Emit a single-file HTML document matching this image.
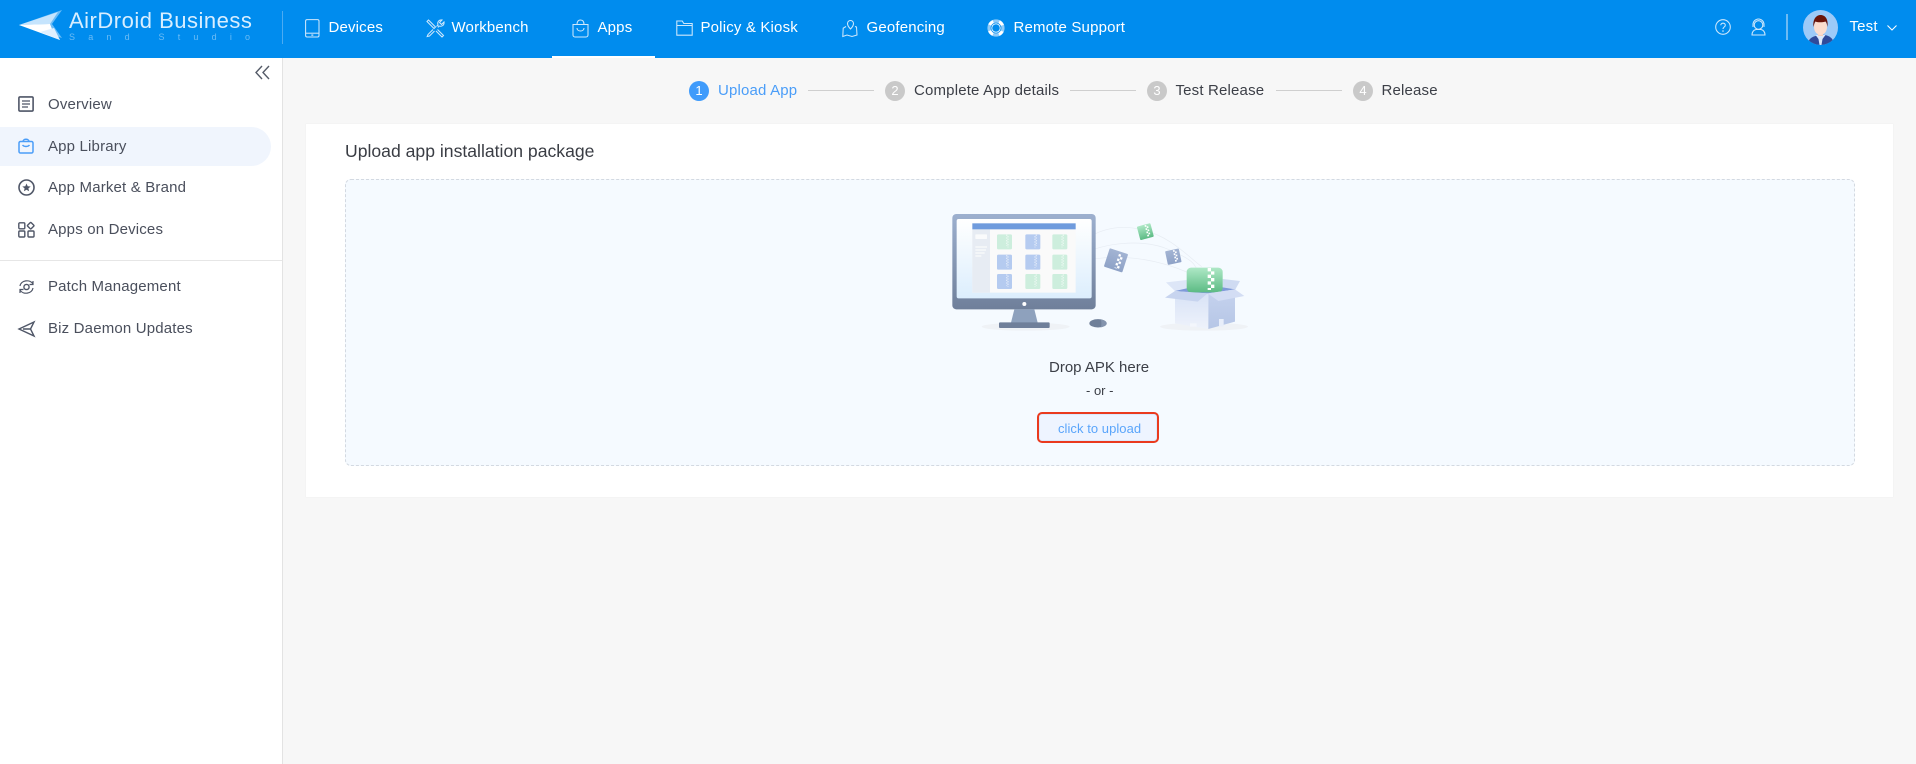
<!DOCTYPE html>
<html><head><meta charset="utf-8"><style>
html,body{margin:0;padding:0;width:1916px;height:764px;overflow:hidden;background:#f7f7f7;font-family:"Liberation Sans",Arial,sans-serif;color:#3c3f47}
.a{position:absolute}
.t{position:absolute;line-height:20px;white-space:nowrap;font-size:15px;letter-spacing:.17px}
.n{color:#fff}
.s{color:#4a4f5c;letter-spacing:.17px}
.c{position:absolute;width:20px;height:20px;border-radius:50%;background:#c9c9c9;color:#fff;font-size:13px;line-height:20px;text-align:center;top:81px}
.l{position:absolute;height:1px;background:#cfcfcf;top:90px}
svg{position:absolute;overflow:visible}
.w{fill:none;stroke:#cfe8fc;stroke-width:1.05}
.d{fill:none;stroke:#4f5667;stroke-width:1.6}
</style></head><body>
<div class="a" style="left:0;top:0;width:1916px;height:58px;background:#008cee"></div>
<svg style="left:0;top:0" width="100" height="58">
<polygon points="19,25 62,10 52,24 62,38" fill="#8fcdfb" opacity=".75"/>
<polygon points="19,25 58,12 50,24" fill="#c5e4fd"/>
<polygon points="19,25 50,24 54,34 60,40" fill="#fff"/>
<polygon points="40,32 60,40 54,28" fill="#dff0ff"/>
</svg>
<div class="t" style="left:69px;top:11px;font-size:22px;letter-spacing:.5px;color:#d8eeff;line-height:20px">AirDroid Business</div>
<div class="t" style="left:69px;top:27px;font-size:9px;letter-spacing:13.2px;color:#6cbcf5;line-height:20px">Sand Studio</div>
<div class="a" style="left:282px;top:11px;width:1px;height:33px;background:#4cabf2"></div>

<svg style="left:305px;top:19px" width="15" height="19"><rect x=".6" y=".6" width="13.400" height="17.400" rx="1.500" class="w"/><path d="M1 14.200h13" class="w"/><rect x="6.300" y="15.500" width="2" height="1.200" fill="#d4eafd"/></svg>
<div class="t n" style="left:328.500px;top:18px">Devices</div>
<svg style="left:426px;top:19px" width="19" height="19"><path d="M1 2.500 2.500 1 9.500 8 8 9.500zM11.500 10.500 17.500 16.500 16 18 10 12M7 10.500 2 15.500 1.200 17.500 3.500 17 8.500 12M10.500 7.500 12 6C11 3 13 .5 16 1L13.500 3.500 15.500 5.500 18 3C18.500 6 16 8 13 7L12 8.500" class="w"/></svg>
<div class="t n" style="left:451.500px;top:18px">Workbench</div>
<svg style="left:572px;top:19px" width="17" height="19"><path d="M1 5.500h15v10.500a2 2 0 0 1-2 2H3a2 2 0 0 1-2-2zM5 5.500C5 3 6 1 8.500 1S12 3 12 5.500M5 9c0 4 7 4 7 0" class="w"/></svg>
<div class="t n" style="left:597.500px;top:18px">Apps</div>
<div class="a" style="left:552px;top:56px;width:103px;height:2px;background:#fff"></div>
<svg style="left:676px;top:20px" width="17" height="16"><path d="M.8 15.200V1h5.500l1.500 2.500H16.200v11.700zM.8 5.500h15.400" class="w"/></svg>
<div class="t n" style="left:700.500px;top:18px">Policy &amp; Kiosk</div>
<svg style="left:842px;top:19px" width="16" height="19"><path d="M8.500 10C6.500 8 5.500 6.500 5.500 4.500a3 3 0 0 1 6 0C11.500 6.500 10.500 8 8.500 10zM4 7.500 1.200 9.200 .8 17.500 5 16l5 1.500L15 16 14.500 8 13 7.500" class="w"/></svg>
<div class="t n" style="left:866.500px;top:18px">Geofencing</div>
<svg style="left:987px;top:19px" width="18" height="18"><circle cx="9" cy="9" r="7" fill="none" stroke="#8fcbf8" stroke-width="3.200"/><circle cx="9" cy="9" r="7" fill="none" stroke="#fff" stroke-width="3.200" stroke-dasharray="5 6" stroke-dashoffset="2.500" transform="rotate(45 9 9)"/><circle cx="9" cy="9" r="4.200" fill="none" stroke="#fff" stroke-width=".8"/></svg>
<div class="t n" style="left:1013.500px;top:18px">Remote Support</div>

<svg style="left:1715px;top:19px" width="16" height="16"><circle cx="8" cy="8" r="7.300" class="w"/><path d="M5.800 6.200C5.800 3.500 10.300 3.500 10.300 6.200 10.300 8 8 8 8 10" class="w"/><circle cx="8" cy="12" r=".8" fill="#d4eafd"/></svg>
<svg style="left:1751px;top:19px" width="15" height="17"><circle cx="7.500" cy="6" r="4.300" class="w"/><path d="M2 8V5.500a5.500 5.500 0 0 1 11 0V8M1 16c0-3.500 2-5 4-5.500h5c2 .5 4 2 4 5.500z" class="w"/></svg>
<div class="a" style="left:1786px;top:14px;width:2px;height:26px;background:#6dbbf4"></div>
<svg style="left:1803px;top:10px" width="35" height="35" viewBox="0 0 35 35"><defs><clipPath id="av"><circle cx="17.500" cy="17.500" r="17.500"/></clipPath></defs><g clip-path="url(#av)"><rect width="35" height="35" fill="#9ccaf8"/><path d="M5 35c0-7 5-9 12.500-10S31 28 31 35z" fill="#2f4a9a"/><path d="M12.500 25h10l-3 4-1 6h-2l-1-6z" fill="#dce8fa"/><rect x="15" y="21" width="5" height="5" fill="#f5cdbb"/><ellipse cx="17.500" cy="17" rx="6.500" ry="8" fill="#fbdccd"/><path d="M10.500 17c-1-8 3-12 7-12s8 3 7 12c-.5-3-1-4.500-2-5.500-3 1-8 1-10 0-1 1-1.500 3-2 5.500z" fill="#6b1409"/></g></svg>
<div class="t n" style="left:1849.500px;top:17px">Test</div>
<svg style="left:1887px;top:25px" width="10" height="6"><path d="M.5.500 5 5 9.500.500" class="w" style="stroke:#fff"/></svg>

<div class="a" style="left:0;top:58px;width:282px;height:706px;background:#fff;border-right:1px solid #e3e3e3"></div>
<svg style="left:255px;top:65px" width="15" height="15"><path d="M7 1 1 7.500 7 14M14 1 8 7.500 14 14" fill="none" stroke="#555b68" stroke-width="1.400"/></svg>

<svg style="left:18px;top:96px" width="16" height="16"><rect x=".9" y=".9" width="14.200" height="14.200" rx="1.200" class="d"/><path d="M4 5h8M4 8h8M4 11h6" class="d" style="stroke-width:1.300"/></svg>
<div class="t s" style="left:48px;top:95px">Overview</div>
<div class="a" style="left:0;top:127px;width:271px;height:39px;background:#f0f5fd;border-radius:0 20px 20px 0"></div>
<svg style="left:18px;top:138px" width="16" height="16"><rect x="1" y="3.500" width="14" height="11.500" rx="1.500" fill="none" stroke="#4a9df8" stroke-width="1.500"/><path d="M5 3.500C5 .5 11 .5 11 3.500M4.500 7c1.500 2 5.500 2 7 0" fill="none" stroke="#4a9df8" stroke-width="1.400"/></svg>
<div class="t s" style="left:48px;top:137px">App Library</div>
<svg style="left:18px;top:179px" width="17" height="17"><circle cx="8.500" cy="8.500" r="7.500" class="d"/><polygon points="8.500,4.500 9.700,7.300 12.700,7.500 10.400,9.400 11.100,12.300 8.500,10.700 5.900,12.300 6.600,9.400 4.300,7.500 7.300,7.300" fill="#4f5667"/></svg>
<div class="t s" style="left:48px;top:178px">App Market &amp; Brand</div>
<svg style="left:18px;top:222px" width="17" height="16"><rect x=".8" y=".8" width="6" height="6" rx="1" class="d" style="stroke-width:1.400"/><rect x=".8" y="9" width="6" height="6" rx="1" class="d" style="stroke-width:1.400"/><rect x="10" y="9" width="6" height="6" rx="1" class="d" style="stroke-width:1.400"/><rect x="10.200" y="1.200" width="5" height="5" rx=".8" transform="rotate(45 12.700 3.700)" class="d" style="stroke-width:1.400"/></svg>
<div class="t s" style="left:48px;top:220px">Apps on Devices</div>
<div class="a" style="left:0;top:260px;width:282px;height:1px;background:#e6e6e6"></div>
<svg style="left:18px;top:279px" width="17" height="16"><circle cx="8.500" cy="8" r="2.600" class="d" style="stroke-width:1.400"/><path d="M2 7c1-6 10-7 13-2M15 9c-1 6-10 7-13 2M15 2v3.500h-3.500M2 14v-3.500h3.500" class="d" style="stroke-width:1.200"/></svg>
<div class="t s" style="left:48px;top:277px">Patch Management</div>
<svg style="left:18px;top:321px" width="17" height="16"><path d="M16 1 1 8l15 7-3.500-7zM12.500 8H5" class="d" style="stroke-width:1.400"/></svg>
<div class="t s" style="left:48px;top:319px">Biz Daemon Updates</div>

<div class="c" style="left:689px;background:#3f9bfb">1</div>
<div class="t" style="left:718px;top:81px;color:#4a9df8">Upload App</div>
<div class="l" style="left:808px;width:66px"></div>
<div class="c" style="left:885px">2</div>
<div class="t" style="left:914px;top:81px">Complete App details</div>
<div class="l" style="left:1070px;width:66px"></div>
<div class="c" style="left:1147px">3</div>
<div class="t" style="left:1175.500px;top:81px">Test Release</div>
<div class="l" style="left:1276px;width:66px"></div>
<div class="c" style="left:1353px">4</div>
<div class="t" style="left:1381.500px;top:81px">Release</div>

<div class="a" style="left:306px;top:124px;width:1587px;height:373px;background:#fff;box-shadow:0 0 1px #e9e9e9"></div>
<div class="t" style="left:345px;top:141px;font-size:17.600px;letter-spacing:0;color:#3a3d44">Upload app installation package</div>
<div class="a" style="left:345px;top:179px;width:1508px;height:285px;background:#f5faff;border:1px dashed #d3d9e1;border-radius:6px"></div>

<svg style="left:930px;top:200px" width="330" height="140" viewBox="0 0 990 420">
<defs>
<linearGradient id="m" x1="0" y1="0" x2="0" y2="1"><stop offset="0" stop-color="#9db0cf"/><stop offset="1" stop-color="#6f7f9a"/></linearGradient>
<linearGradient id="sc" x1="0" y1="0" x2="0" y2="1"><stop offset="0" stop-color="#fff"/><stop offset="1" stop-color="#dceefd"/></linearGradient>
<linearGradient id="g" x1="0" y1="0" x2="0" y2="1"><stop offset="0" stop-color="#aee8c6"/><stop offset="1" stop-color="#5cbb84"/></linearGradient>
<linearGradient id="bl" x1="0" y1="0" x2="0" y2="1"><stop offset="0" stop-color="#a3b4d3"/><stop offset="1" stop-color="#8ea2c7"/></linearGradient>
<linearGradient id="bf" x1="0" y1="0" x2="0" y2="1"><stop offset="0" stop-color="#d7e2f6"/><stop offset="1" stop-color="#eef2fb"/></linearGradient>
<linearGradient id="br" x1="0" y1="0" x2="0" y2="1"><stop offset="0" stop-color="#c6d3ee"/><stop offset="1" stop-color="#b6c6e6"/></linearGradient>
</defs>
<ellipse cx="287" cy="380" rx="132" ry="12" fill="#eff2f6"/>
<ellipse cx="822" cy="380" rx="132" ry="12" fill="#eff2f6"/>
<g fill="none" stroke="#e7ecf3" stroke-width="2">
<path d="M438 152C480 90 560 70 640 90S770 165 815 200"/>
<path d="M438 172C520 125 640 115 720 150S790 195 800 205"/>
<path d="M438 188C520 165 640 160 775 218"/>
</g>
<rect x="67" y="42" width="430" height="286" rx="12" fill="url(#m)"/>
<rect x="80" y="57" width="405" height="238" rx="6" fill="url(#sc)"/>
<rect x="127" y="70" width="310" height="208" fill="#fafafa"/>
<rect x="127" y="88" width="53" height="190" fill="#e7ecf3"/>
<rect x="127" y="70" width="310" height="18" fill="#6f9bdd"/>
<rect x="136" y="103" width="35" height="14" rx="2" fill="#fafbfc"/>
<path d="M136 141h35M136 150h32M136 159h28M136 168h18" stroke="#fafbfc" stroke-width="4"/>
<g>
<rect x="201" y="103" width="45" height="45" rx="4" fill="#cdeedd"/><rect x="286" y="103" width="45" height="45" rx="4" fill="#b5cbf0"/><rect x="367" y="103" width="45" height="45" rx="4" fill="#cdeedd"/>
<rect x="201" y="164" width="45" height="45" rx="4" fill="#b5cbf0"/><rect x="286" y="164" width="45" height="45" rx="4" fill="#b5cbf0"/><rect x="367" y="164" width="45" height="45" rx="4" fill="#cdeedd"/>
<rect x="201" y="222" width="45" height="45" rx="4" fill="#b5cbf0"/><rect x="286" y="222" width="45" height="45" rx="4" fill="#cdeedd"/><rect x="367" y="222" width="45" height="45" rx="4" fill="#cdeedd"/>
</g>
<g stroke="#fff" stroke-width="4" stroke-dasharray="4 4" opacity=".55">
<path d="M230 104v34M319 104v34M400 104v34M230 165v34M319 165v34M400 165v34M230 223v34M319 223v34M400 223v34"/>
<path d="M234 108v34M315 108v34M396 108v34M234 169v34M315 169v34M396 169v34M234 227v34M315 227v34M396 227v34"/>
</g>
<circle cx="283" cy="312" r="6" fill="#fff"/>
<polygon points="253,328 313,328 323,368 243,368" fill="#8ea1bd"/>
<rect x="207" y="367" width="152" height="17" rx="3" fill="#6f7f9a"/>
<ellipse cx="504" cy="370" rx="26" ry="12.500" fill="#6f7f99"/>
<path d="M512 358c10 2 18 6 18 12s-8 10-18 12c3-7 3-17 0-24z" fill="#8393ad"/>
<g transform="rotate(-15 646 95)"><rect x="625" y="74" width="42" height="42" rx="3" fill="url(#g)"/><g stroke="#fff" stroke-width="5" stroke-dasharray="5 5"><path d="M651 76v36"/><path d="M656 81v30"/></g></g>
<g transform="rotate(18 558 181)"><rect x="529" y="152" width="58" height="58" rx="3" fill="url(#bl)"/><g stroke="#fff" stroke-width="7" stroke-dasharray="7 7"><path d="M564 160v44"/><path d="M571 167v40"/></g></g>
<g transform="rotate(-12 730 170)"><rect x="709" y="149" width="42" height="42" rx="3" fill="url(#bl)"/><g stroke="#fff" stroke-width="5" stroke-dasharray="5 5"><path d="M735 151v36"/><path d="M740 156v30"/></g></g>
<polygon points="708,247 770,240 770,270 735,273" fill="#dde6f7"/>
<polygon points="878,237 930,243 915,270 878,265" fill="#cfdbf2"/>
<polygon points="735,273 770,265 878,262 915,268 833,282" fill="#7f9ad9"/>
<rect x="770" y="203" width="108" height="74" rx="13" fill="url(#g)"/>
<g stroke="#fff" stroke-width="10" stroke-dasharray="10 10"><path d="M838 204v66"/><path d="M848 214v50"/></g>
<polygon points="735,275 835,280 835,387 735,370" fill="url(#bf)"/>
<polygon points="835,280 915,268 915,365 835,387" fill="url(#br)"/>
<polygon points="735,273 833,280 803,305 705,293" fill="#c7d4ef"/>
<polygon points="833,280 915,268 943,288 865,303" fill="#d3ddf4"/>
<rect x="780" y="370" width="20" height="10" fill="#f3f6fc"/><rect x="867" y="357" width="14" height="22" fill="#e8eefa"/>
</svg>

<div class="t" style="left:1049px;top:358px;letter-spacing:0">Drop APK here</div>
<div class="t" style="left:1086px;top:381px;font-size:13px;letter-spacing:0">- or -</div>
<div class="a" style="left:1037px;top:412px;width:118px;height:27px;background:#eef4ff;border:2px solid #ea3a1e;border-radius:5px;box-shadow:inset 0 0 0 1px #dbe9fb"></div>
<div class="t" style="left:1058px;top:419px;font-size:13px;letter-spacing:.05px;color:#5aa5fb">click to upload</div>
</body></html>
